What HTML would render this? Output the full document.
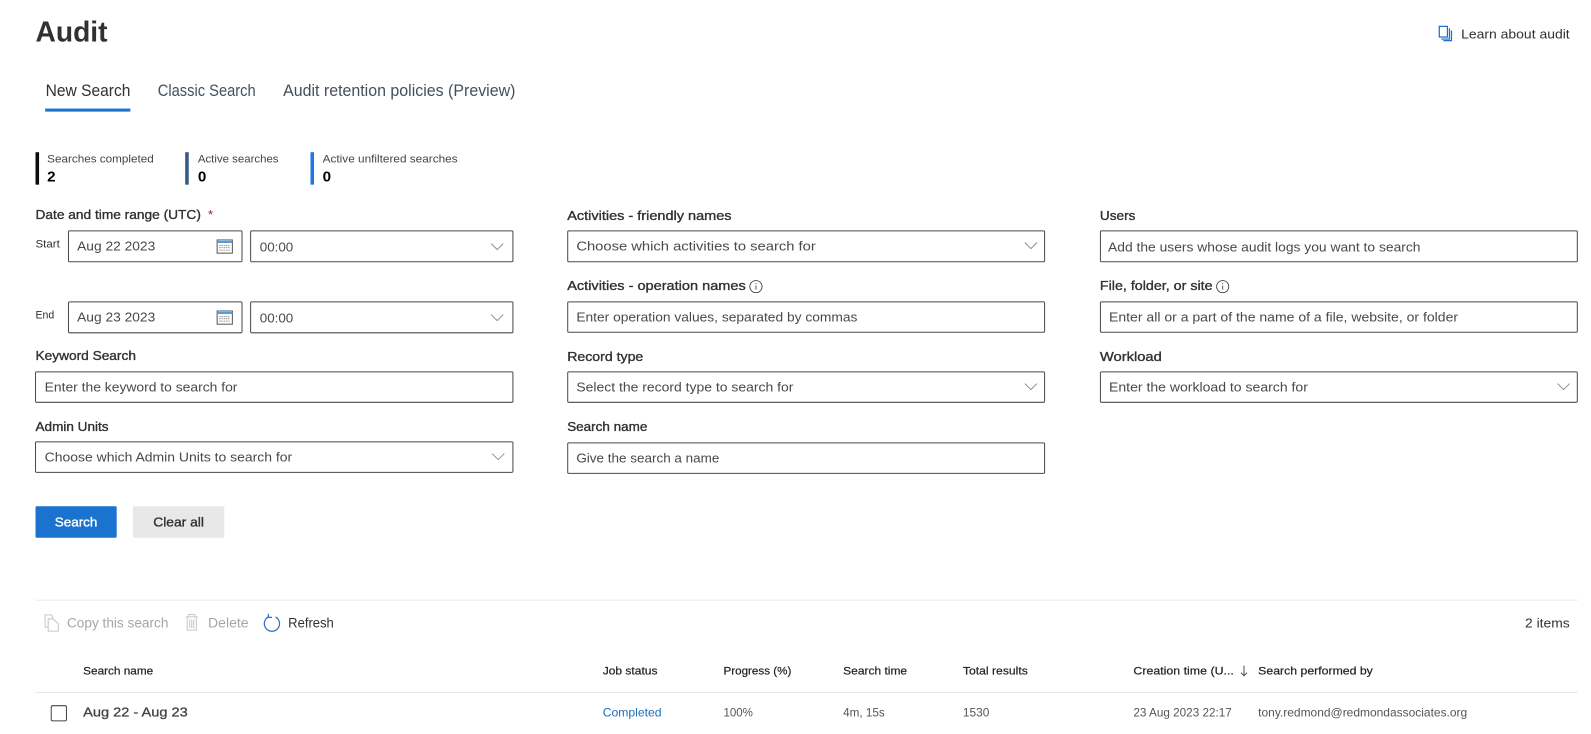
<!DOCTYPE html>
<html><head><meta charset="utf-8"><title>Audit</title>
<style>
html,body{margin:0;padding:0;background:#fff;width:1591px;height:734px;overflow:hidden}
svg{display:block}
text{font-family:"Liberation Sans",sans-serif;fill:#323130;white-space:pre}
.b{font-weight:bold}
.in{font-size:13px;fill:#4a4948}
.lab{font-size:13px;fill:#323130;stroke:#323130;stroke-width:.35}
.st{font-size:11px;fill:#444}
.hd{font-size:11px;fill:#222;stroke:#222;stroke-width:.2}
.cell{font-size:11.5px;fill:#555}
.box{fill:#fff;stroke:#4b4a49;stroke-width:1}
.chev{fill:none;stroke:#8a8988;stroke-width:.9}
</style></head><body>
<svg width="1591" height="734" viewBox="0 0 1568 723.4" preserveAspectRatio="none" xmlns="http://www.w3.org/2000/svg">
<rect width="1568" height="724" fill="#fff"/>
<text x="35" y="41" class="b" font-size="28" textLength="71" lengthAdjust="spacingAndGlyphs">Audit</text>
<g fill="none" stroke="#1a6fc9" stroke-width="1.2"><rect x="1418.500" y="26" width="8" height="10.500"/><path d="M1428.500 28v10.500h-8M1430.500 30v10h-8"/></g>
<text x="1440" y="38" font-size="13" textLength="107" lengthAdjust="spacingAndGlyphs">Learn about audit</text>
<text x="45" y="94.500" font-size="16" textLength="83.500" lengthAdjust="spacingAndGlyphs">New Search</text>
<rect x="44.500" y="107" width="84" height="3" fill="#1a74cf"/>
<text x="155.500" y="94.500" font-size="16" textLength="96.500" lengthAdjust="spacingAndGlyphs" style="fill:#44505c">Classic Search</text>
<text x="279" y="94.500" font-size="16" textLength="229" lengthAdjust="spacingAndGlyphs" style="fill:#44505c">Audit retention policies (Preview)</text>
<rect x="35" y="150" width="3.500" height="32" fill="#0c0c0c"/>
<rect x="182.500" y="150" width="3.500" height="32" fill="#365a8a"/>
<rect x="306" y="150" width="3.500" height="32" fill="#1f78e0"/>
<text x="46.500" y="160" class="st" textLength="105" lengthAdjust="spacingAndGlyphs">Searches completed</text>
<text x="195" y="160" class="st" textLength="79.500" lengthAdjust="spacingAndGlyphs">Active searches</text>
<text x="318" y="160" class="st" textLength="133" lengthAdjust="spacingAndGlyphs">Active unfiltered searches</text>
<text x="46.500" y="179" class="b" font-size="15" style="fill:#000">2</text>
<text x="195" y="179" class="b" font-size="15" style="fill:#000">0</text>
<text x="318" y="179" class="b" font-size="15" style="fill:#000">0</text>

<text x="35" y="216" class="lab" textLength="163" lengthAdjust="spacingAndGlyphs">Date and time range (UTC)</text>
<text x="205" y="216" class="lab" style="fill:#a4262c;stroke:none">*</text>
<text x="35" y="244" font-size="10.500" textLength="24" lengthAdjust="spacingAndGlyphs">Start</text>
<text x="35" y="314" font-size="10.500" textLength="18.500" lengthAdjust="spacingAndGlyphs">End</text>

<rect class="box" x="67.500" y="227.500" width="171" height="30.500" rx="1"/>
<text x="76" y="247" class="in" textLength="77" lengthAdjust="spacingAndGlyphs">Aug 22 2023</text>
<g><rect x="214" y="236.500" width="15" height="13" fill="#fff" stroke="#555" stroke-width="1"/><path d="M214 238.500h15" stroke="#4aa0e6" stroke-width="2"/><path d="M216 242h11M216 244h11M216 246.500h11" stroke="#9a9a9a" stroke-width="1" stroke-dasharray="1.500 .7"/></g>
<rect class="box" x="247" y="227.500" width="258.500" height="30.500" rx="1"/>
<text x="256" y="248" class="in" textLength="33" lengthAdjust="spacingAndGlyphs">00:00</text>
<path class="chev" d="M484 240l6 6 6-6"/>

<rect class="box" x="67.500" y="297.500" width="171" height="30.500" rx="1"/>
<text x="76" y="317" class="in" textLength="77" lengthAdjust="spacingAndGlyphs">Aug 23 2023</text>
<g><rect x="214" y="306.500" width="15" height="13" fill="#fff" stroke="#555" stroke-width="1"/><path d="M214 308.500h15" stroke="#4aa0e6" stroke-width="2"/><path d="M216 312h11M216 314h11M216 316.500h11" stroke="#9a9a9a" stroke-width="1" stroke-dasharray="1.500 .7"/></g>
<rect class="box" x="247" y="297.500" width="258.500" height="30.500" rx="1"/>
<text x="256" y="318" class="in" textLength="33" lengthAdjust="spacingAndGlyphs">00:00</text>
<path class="chev" d="M484 310l6 6 6-6"/>

<text x="35" y="355" class="lab" textLength="99" lengthAdjust="spacingAndGlyphs">Keyword Search</text>
<rect class="box" x="35" y="366.500" width="470.500" height="30" rx="1"/>
<text x="44" y="386" class="in" textLength="190" lengthAdjust="spacingAndGlyphs">Enter the keyword to search for</text>
<text x="35" y="425" class="lab" textLength="72" lengthAdjust="spacingAndGlyphs">Admin Units</text>
<rect class="box" x="35" y="435.500" width="470.500" height="30" rx="1"/>
<text x="44" y="455" class="in" textLength="244" lengthAdjust="spacingAndGlyphs">Choose which Admin Units to search for</text>
<path class="chev" d="M485 447l6 6 6-6"/>

<text x="559" y="217" class="lab" textLength="162" lengthAdjust="spacingAndGlyphs">Activities - friendly names</text>
<rect class="box" x="559.500" y="227.500" width="470" height="30.500" rx="1"/>
<text x="568" y="247" class="in" textLength="236" lengthAdjust="spacingAndGlyphs">Choose which activities to search for</text>
<path class="chev" d="M1010 239l6 6 6-6"/>
<text x="559" y="286" class="lab" textLength="176" lengthAdjust="spacingAndGlyphs">Activities - operation names</text>
<g fill="none" stroke="#444" stroke-width=".9"><circle cx="745" cy="282.500" r="6"/><path d="M745 281.500v4M745 279v1.200"/></g>
<rect class="box" x="559.500" y="297.500" width="470" height="30" rx="1"/>
<text x="568" y="317" class="in" textLength="277" lengthAdjust="spacingAndGlyphs">Enter operation values, separated by commas</text>
<text x="559" y="356" class="lab" textLength="75" lengthAdjust="spacingAndGlyphs">Record type</text>
<rect class="box" x="559.500" y="366.500" width="470" height="30" rx="1"/>
<text x="568" y="386" class="in" textLength="214" lengthAdjust="spacingAndGlyphs">Select the record type to search for</text>
<path class="chev" d="M1010 378l6 6 6-6"/>
<text x="559" y="425" class="lab" textLength="79" lengthAdjust="spacingAndGlyphs">Search name</text>
<rect class="box" x="559.500" y="436.500" width="470" height="30" rx="1"/>
<text x="568" y="456" class="in" textLength="141" lengthAdjust="spacingAndGlyphs">Give the search a name</text>

<text x="1084" y="217" class="lab" textLength="35" lengthAdjust="spacingAndGlyphs">Users</text>
<rect class="box" x="1084.500" y="227.500" width="470" height="30.500" rx="1"/>
<text x="1092" y="248" class="in" textLength="308" lengthAdjust="spacingAndGlyphs">Add the users whose audit logs you want to search</text>
<text x="1084" y="286" class="lab" textLength="111" lengthAdjust="spacingAndGlyphs">File, folder, or site</text>
<g fill="none" stroke="#444" stroke-width=".9"><circle cx="1205" cy="282.500" r="6"/><path d="M1205 281.500v4M1205 279v1.200"/></g>
<rect class="box" x="1084.500" y="297.500" width="470" height="30" rx="1"/>
<text x="1093" y="317" class="in" textLength="344" lengthAdjust="spacingAndGlyphs">Enter all or a part of the name of a file, website, or folder</text>
<text x="1084" y="356" class="lab" textLength="61" lengthAdjust="spacingAndGlyphs">Workload</text>
<rect class="box" x="1084.500" y="366.500" width="470" height="30" rx="1"/>
<text x="1093" y="386" class="in" textLength="196" lengthAdjust="spacingAndGlyphs">Enter the workload to search for</text>
<path class="chev" d="M1535 378l6 6 6-6"/>

<rect x="35" y="499" width="80" height="31" rx="1" fill="#1a74cf"/>
<text x="54" y="519" font-size="13" textLength="42" lengthAdjust="spacingAndGlyphs" style="fill:#fff;stroke:#fff;stroke-width:.35">Search</text>
<rect x="131" y="499" width="90" height="31" rx="1" fill="#e8e8e8"/>
<text x="151" y="519" font-size="13" textLength="50" lengthAdjust="spacingAndGlyphs" style="stroke:#323130;stroke-width:.35">Clear all</text>

<rect x="35" y="591" width="1520" height="1" fill="#ececec"/>
<g fill="none" stroke="#c6c6c6" stroke-width="1" transform="translate(0 -1.500)"><path d="M44.500 607.500h6l1 1v11h-7z"/><path d="M47.500 611.500h5l5 5v7h-10z" fill="#fff"/></g>
<text x="66" y="618.500" font-size="13.500" textLength="100" lengthAdjust="spacingAndGlyphs" style="fill:#a8a6a5">Copy this search</text>
<g fill="none" stroke="#c6c6c6" stroke-width="1" transform="translate(0 -1.500)"><path d="M183 609.500h12M186 609v-2h6v2M184.500 610v12.500h9V610M187 612v8.500M189 612v8.500M191 612v8.500"/></g>
<text x="205" y="618.500" font-size="13.500" textLength="40" lengthAdjust="spacingAndGlyphs" style="fill:#a8a6a5">Delete</text>
<path d="M264.500 608a7.500 7.500 0 1 0 7 0" fill="none" stroke="#2b6cc4" stroke-width="1.200"/>
<path d="M264.500 605v3.500h3.500" fill="none" stroke="#2b6cc4" stroke-width="1.200"/>
<text x="284" y="618.500" font-size="13.500" textLength="45" lengthAdjust="spacingAndGlyphs">Refresh</text>
<text x="1503" y="618.500" font-size="13" textLength="44" lengthAdjust="spacingAndGlyphs">2 items</text>

<text x="82" y="665" class="hd" textLength="69" lengthAdjust="spacingAndGlyphs">Search name</text>
<text x="594" y="665" class="hd" textLength="54" lengthAdjust="spacingAndGlyphs">Job status</text>
<text x="713" y="665" class="hd" textLength="67" lengthAdjust="spacingAndGlyphs">Progress (%)</text>
<text x="831" y="665" class="hd" textLength="63" lengthAdjust="spacingAndGlyphs">Search time</text>
<text x="949" y="665" class="hd" textLength="64" lengthAdjust="spacingAndGlyphs">Total results</text>
<text x="1117" y="665" class="hd" textLength="99" lengthAdjust="spacingAndGlyphs">Creation time (U...</text>
<path d="M1226 656v10M1223 663l3 3 3-3" fill="none" stroke="#444" stroke-width=".9"/>
<text x="1240" y="665" class="hd" textLength="113" lengthAdjust="spacingAndGlyphs">Search performed by</text>
<rect x="35" y="682" width="1520" height="1" fill="#e6e6e6"/>

<rect x="50.500" y="695.500" width="15" height="15" rx="1.500" fill="#fff" stroke="#444"/>
<text x="82" y="706" font-size="13" textLength="103" lengthAdjust="spacingAndGlyphs" style="fill:#444;stroke:#444;stroke-width:.3">Aug 22 - Aug 23</text>
<text x="594" y="706" class="cell" textLength="58" lengthAdjust="spacingAndGlyphs" style="fill:#1a6fb8">Completed</text>
<text x="713" y="706" class="cell" textLength="29" lengthAdjust="spacingAndGlyphs">100%</text>
<text x="831" y="706" class="cell" textLength="41" lengthAdjust="spacingAndGlyphs">4m, 15s</text>
<text x="949" y="706" class="cell" textLength="26" lengthAdjust="spacingAndGlyphs">1530</text>
<text x="1117" y="706" class="cell" textLength="97" lengthAdjust="spacingAndGlyphs">23 Aug 2023 22:17</text>
<text x="1240" y="706" class="cell" textLength="206" lengthAdjust="spacingAndGlyphs">tony.redmond@redmondassociates.org</text>
</svg>
</body></html>
